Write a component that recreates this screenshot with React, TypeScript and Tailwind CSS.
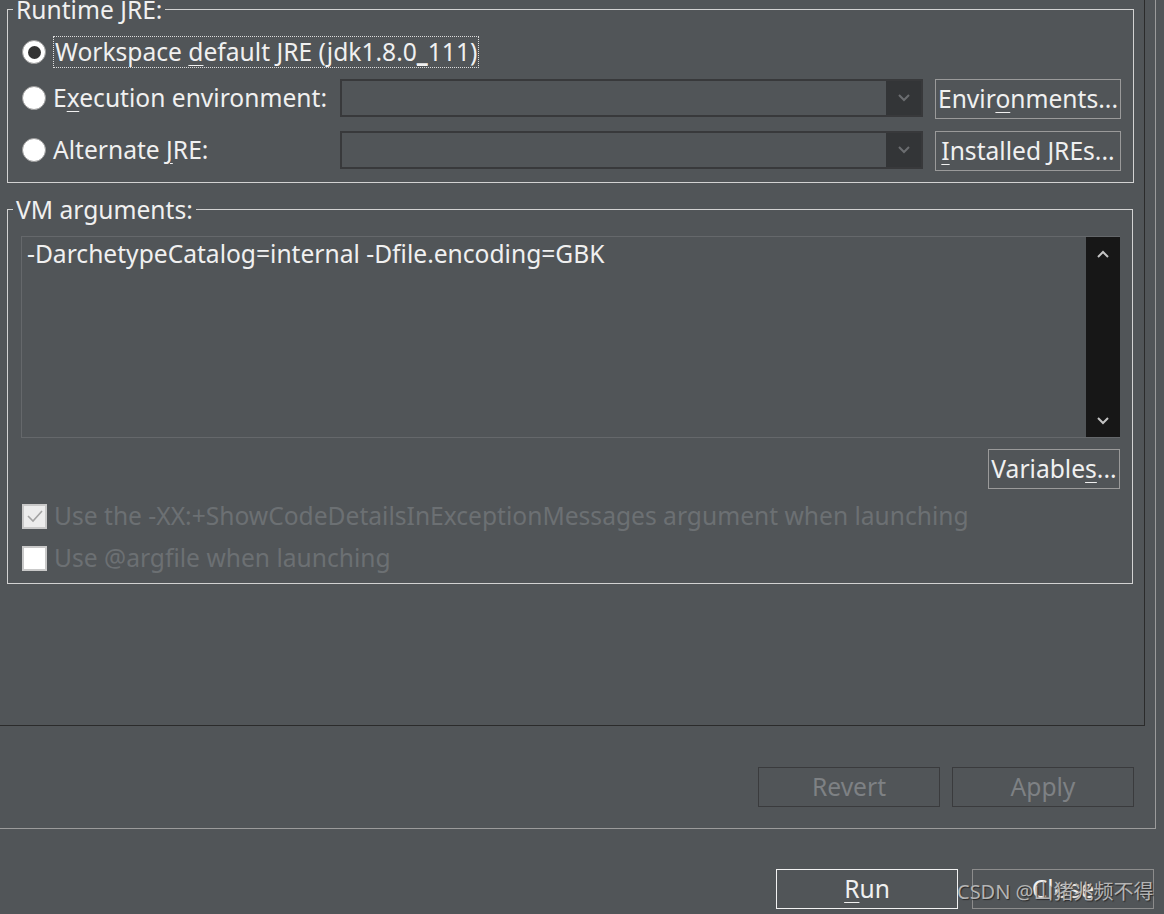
import React from "react";

const FONT = { fontFamily: '"Noto Sans", "Open Sans", sans-serif' };

const Mn: React.FC<{ children: React.ReactNode }> = ({ children }) => (
  <span className="underline underline-offset-[4px] decoration-1">{children}</span>
);

const Radio: React.FC<{ checked?: boolean }> = ({ checked }) => (
  <div className="w-[24px] h-[24px] shrink-0 rounded-full bg-white border border-[#9a9a9a] flex items-center justify-center">
    {checked && <div className="w-[13px] h-[13px] rounded-full bg-[#333333]" />}
  </div>
);

const Chevron: React.FC<{ up?: boolean; color: string }> = ({ up, color }) => (
  <svg width="12" height="8" viewBox="0 0 12 8">
    <polyline
      points={up ? "1,7 6,2 11,7" : "1,1 6,6 11,1"}
      fill="none"
      stroke={color}
      strokeWidth="2"
    />
  </svg>
);

const Combo = () => (
  <div className="w-[583px] h-[38px] border-2 border-[#38393b] flex">
    <div className="flex-1" />
    <div className="w-[35px] h-full bg-[#333537] flex items-center justify-center">
      <Chevron color="#6b6d70" />
    </div>
  </div>
);

const Btn: React.FC<{ children: React.ReactNode; className?: string }> = ({ children, className }) => (
  <button className={`h-[40px] border flex items-center justify-center leading-none whitespace-nowrap ${className ?? ""}`}>
    <span>{children}</span>
  </button>
);

const Check: React.FC<{ checked?: boolean }> = ({ checked }) => (
  <div
    className={`w-[25px] h-[25px] shrink-0 border-2 border-[#c9c9c9] flex items-center justify-center ${
      checked ? "bg-[#ececec]" : "bg-white"
    }`}
  >
    {checked && (
      <svg width="18" height="14" viewBox="0 0 18 14">
        <polyline points="2,7 7,12 16,2" fill="none" stroke="#a3a3a3" strokeWidth="1.6" />
      </svg>
    )}
  </div>
);

export default function App() {
  return (
    <div
      className="relative w-[1164px] h-[914px] overflow-hidden bg-[#515558] text-[24.6px] text-[#f0f0f0] flex flex-col"
      style={FONT}
    >
      <div className="w-[1156px] h-[829px] border-r border-b border-[#9b9b9b] flex flex-col">
        <div className="w-[1145px] h-[726px] border-r border-b border-[#2b2b2b] pl-[7px]">
          {/* Runtime JRE group */}
          <fieldset className="w-[1126px] border border-[#d2d2d2] pl-[14px] pr-[12px] pt-[17px] pb-[11px] flex flex-col">
            <legend className="-ml-[9px] px-[3px] leading-[19px]">Runtime JRE:</legend>
            <div className="h-[32px] flex items-center">
              <Radio checked />
              <span className="ml-[7px] px-[1px] h-[32px] inline-block border border-dotted border-[#dcdcdc] leading-[30px] whitespace-nowrap">
                Workspace <Mn>d</Mn>efault JRE (jdk1.8.0<Mn>_</Mn>111)
              </span>
            </div>
            <div className="mt-[11px] h-[40px] flex items-start">
              <div className="w-[318px] h-[38px] flex items-center">
                <Radio />
                <span className="ml-[7px] whitespace-nowrap">
                  E<Mn>x</Mn>ecution environment:
                </span>
              </div>
              <Combo />
              <Btn className="ml-[12px] w-[186px] border-[#9a9a9a]">
                Envir<Mn>o</Mn>nments...
              </Btn>
            </div>
            <div className="mt-[12px] h-[40px] flex items-start">
              <div className="w-[318px] h-[38px] flex items-center">
                <Radio />
                <span className="ml-[7px] whitespace-nowrap">
                  Alternate <Mn>J</Mn>RE:
                </span>
              </div>
              <Combo />
              <Btn className="ml-[12px] w-[186px] border-[#9a9a9a]">
                <Mn>I</Mn>nstalled JREs...
              </Btn>
            </div>
          </fieldset>

          {/* VM arguments group */}
          <fieldset className="mt-[17px] w-[1126px] border border-[#d2d2d2] pl-[13px] pr-[12px] pt-[17px] pb-[8px] flex flex-col">
            <legend className="-ml-[8px] px-[3px] leading-[19px]">VM arguments:</legend>
            <div className="h-[202px] flex border border-r-0 border-[#65686b]">
              <div className="flex-1 pl-[5px] pt-[1px] leading-[32px]">
                -DarchetypeCatalog=internal -Dfile.encoding=GBK
              </div>
              <div className="w-[34px] h-full bg-[#171717] flex flex-col items-center justify-between pt-[13px] pb-[12px]">
                <Chevron up color="#c4c4c4" />
                <Chevron color="#c4c4c4" />
              </div>
            </div>
            <div className="mt-[11px] flex justify-end">
              <Btn className="w-[132px] border-[#9a9a9a]">
                Variable<Mn>s</Mn>...
              </Btn>
            </div>
            <div className="mt-[10px] h-[34px] flex items-center ml-[1px] text-[#6c7073]">
              <Check checked />
              <span className="ml-[7px] whitespace-nowrap">
                Use the -XX:+ShowCodeDetailsInExceptionMessages argument when launching
              </span>
            </div>
            <div className="mt-[8px] h-[34px] flex items-center ml-[1px] text-[#6c7073]">
              <Check />
              <span className="ml-[7px] whitespace-nowrap">Use @argfile when launching</span>
            </div>
          </fieldset>
        </div>

        <div className="mt-[41px] pr-[21px] flex justify-end gap-[12px] text-[#7e8184]">
          <Btn className="w-[182px] border-[#3a3b3d]">Revert</Btn>
          <Btn className="w-[182px] border-[#3a3b3d]">Apply</Btn>
        </div>
      </div>

      <div className="mt-[40px] pr-[10px] flex justify-end gap-[14px]">
        <Btn className="w-[182px] border-[#f2f2f2]">
          <Mn>R</Mn>un
        </Btn>
        <Btn className="w-[182px] border-[#8c8c8c]">Close</Btn>
      </div>

      <div
        className="absolute left-[957px] top-[877px] text-[20px] leading-[30px] text-[#b4b4b4] whitespace-nowrap [text-shadow:1px_1px_1px_#2a2a2a]"
        style={{ fontFamily: '"Noto Sans", "Noto Sans CJK SC", sans-serif' }}
      >
        CSDN @山猪兆频不得
      </div>
    </div>
  );
}
